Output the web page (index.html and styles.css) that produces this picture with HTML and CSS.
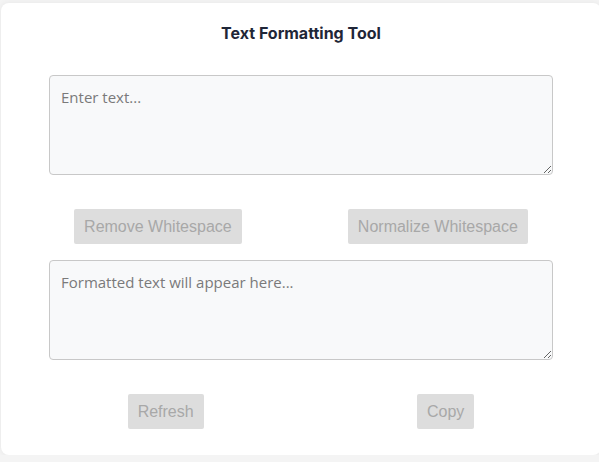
FILE: index.html
```html
<!DOCTYPE html>
<html>
<head>
<meta charset="utf-8">
<link rel="stylesheet" href="styles.css">
</head>
<body>
<div class="card">
  <h1 class="title">Text Formatting Tool</h1>
  <textarea class="box" placeholder="Enter text..."></textarea>
  <div class="actions first">
    <button class="btn" disabled>Remove Whitespace</button>
    <button class="btn" disabled>Normalize Whitespace</button>
  </div>
  <textarea class="box" placeholder="Formatted text will appear here..." readonly></textarea>
  <div class="actions last">
    <button class="btn" disabled>Refresh</button>
    <button class="btn" disabled>Copy</button>
  </div>
</div>
</body>
</html>
```
FILE: styles.css
```css
html, body {
  margin: 0;
  padding: 0;
  overflow: hidden;
  background: #f4f4f4;
}
.card {
  box-sizing: border-box;
  width: 600px;
  margin: 3px 0 0 1px;
  padding: 20px 20px 26px;
  background: #ffffff;
  border-radius: 8px;
  box-shadow: 0 0 6px rgba(0, 0, 0, 0.06);
}
.title {
  margin: 0;
  padding-top: 1px;
  height: 51px;
  font-family: Inter, "Noto Sans", sans-serif;
  font-weight: 700;
  font-size: 16px;
  line-height: 19px;
  color: #1f2638;
  text-align: center;
}
.box {
  display: block;
  box-sizing: border-box;
  width: 90%;
  height: 100px;
  margin: 0 auto;
  padding: 11px 11px;
  border: 1px solid #c8c8c8;
  border-radius: 4px;
  background: #f8f9fa;
  font-family: "Open Sans", sans-serif;
  font-size: 15px;
  line-height: 21px;
  color: #333;
  resize: vertical;
  outline: none;
}
.box::placeholder {
  color: #7a7a7a;
}
.actions {
  display: flex;
  justify-content: space-around;
}
.actions.first {
  margin: 34px 0 16px;
}
.actions.last {
  margin-top: 34px;
}
.btn {
  padding: 8px 10px;
  border: none;
  border-radius: 2px;
  background: #dddddd;
  color: #a8a8a8;
  font-family: "Liberation Sans", Arial, sans-serif;
  font-size: 16px;
  line-height: 19px;
}
```
